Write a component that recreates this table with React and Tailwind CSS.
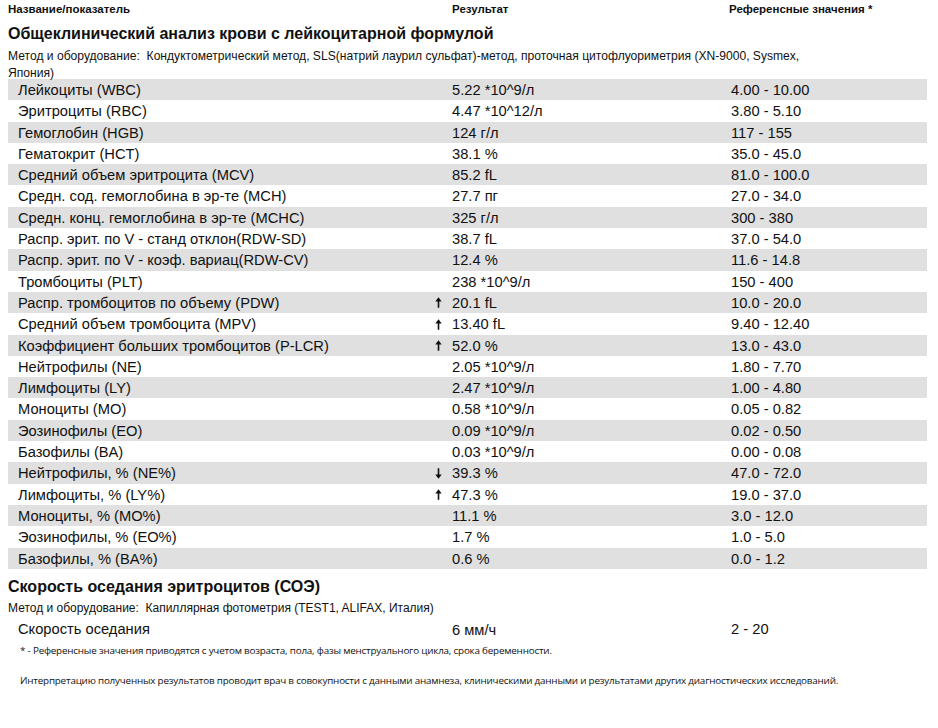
const rows = [
  ["Лейкоциты (WBC)", "", "5.22 *10^9/л", "4.00 - 10.00"],
  ["Эритроциты (RBC)", "", "4.47 *10^12/л", "3.80 - 5.10"],
  ["Гемоглобин (HGB)", "", "124 г/л", "117 - 155"],
  ["Гематокрит (HCT)", "", "38.1 %", "35.0 - 45.0"],
  ["Средний объем эритроцита (MCV)", "", "85.2 fL", "81.0 - 100.0"],
  ["Средн. сод. гемоглобина в эр-те (MCH)", "", "27.7 пг", "27.0 - 34.0"],
  ["Средн. конц. гемоглобина в эр-те (MCHC)", "", "325 г/л", "300 - 380"],
  ["Распр. эрит. по V - станд отклон(RDW-SD)", "", "38.7 fL", "37.0 - 54.0"],
  ["Распр. эрит. по V - коэф. вариац(RDW-CV)", "", "12.4 %", "11.6 - 14.8"],
  ["Тромбоциты (PLT)", "", "238 *10^9/л", "150 - 400"],
  ["Распр. тромбоцитов по объему (PDW)", "up", "20.1 fL", "10.0 - 20.0"],
  ["Средний объем тромбоцита (MPV)", "up", "13.40 fL", "9.40 - 12.40"],
  ["Коэффициент больших тромбоцитов (P-LCR)", "up", "52.0 %", "13.0 - 43.0"],
  ["Нейтрофилы (NE)", "", "2.05 *10^9/л", "1.80 - 7.70"],
  ["Лимфоциты (LY)", "", "2.47 *10^9/л", "1.00 - 4.80"],
  ["Моноциты (MO)", "", "0.58 *10^9/л", "0.05 - 0.82"],
  ["Эозинофилы (EO)", "", "0.09 *10^9/л", "0.02 - 0.50"],
  ["Базофилы (BA)", "", "0.03 *10^9/л", "0.00 - 0.08"],
  ["Нейтрофилы, % (NE%)", "down", "39.3 %", "47.0 - 72.0"],
  ["Лимфоциты, % (LY%)", "up", "47.3 %", "19.0 - 37.0"],
  ["Моноциты, % (MO%)", "", "11.1 %", "3.0 - 12.0"],
  ["Эозинофилы, % (EO%)", "", "1.7 %", "1.0 - 5.0"],
  ["Базофилы, % (BA%)", "", "0.6 %", "0.0 - 1.2"],
];

const Arrow = ({ dir }) => (
  <svg width="7" height="11" viewBox="0 0 7 11" className={dir === "down" ? "rotate-180" : ""}>
    <path d="M3.5 0.3 L6.7 4.6 L4.3 4.6 L4.3 10.7 L2.7 10.7 L2.7 4.6 L0.3 4.6 Z" fill="#111" />
  </svg>
);

const notesFont = { fontFamily: '"Open Sans", "Noto Sans", sans-serif' };

export default function App() {
  return (
    <div className="w-[938px] h-[728px] bg-white text-[#111] overflow-hidden font-['Liberation_Sans',Arial,sans-serif]">
      <div className="grid grid-cols-[444px_279px_1fr] pl-2 pt-[3px] h-[16px] text-[11.5px] font-bold leading-[13px]">
        <div>Название/показатель</div>
        <div>Результат</div>
        <div className="-ml-[2px]">Референсные значения *</div>
      </div>

      <h1 className="pl-2 pt-[8px] text-[16px] font-bold leading-[20px]">
        Общеклинический анализ крови с лейкоцитарной формулой
      </h1>
      <p className="pl-2 pt-[4px] pr-[120px] text-[12.1px] leading-[17px]">
        Метод и оборудование:&nbsp; Кондуктометрический метод, SLS(натрий лаурил сульфат)-метод, проточная цитофлуориметрия (XN-9000, Sysmex, Япония)
      </p>

      <div className="ml-2 w-[919px] mt-[-3px]">
        {rows.map(([name, flag, res, ref], i) => (
          <div
            key={name}
            className={`grid grid-cols-[428px_16px_279px_1fr] h-[21.3px] items-center text-[14.7px] ${i % 2 === 0 ? "bg-[#e0e0e0]" : "bg-white"}`}
          >
            <div className="pl-[10px] whitespace-nowrap">{name}</div>
            <div className="flex items-center -ml-[1px]">{flag && <Arrow dir={flag} />}</div>
            <div>{res}</div>
            <div>{ref}</div>
          </div>
        ))}
      </div>

      <h2 className="pl-2 pt-[8px] text-[16px] font-bold leading-[20px]">Скорость оседания эритроцитов (СОЭ)</h2>
      <p className="pl-2 pt-[4px] text-[12px] leading-[15px]">
        Метод и оборудование:&nbsp; Капиллярная фотометрия (TEST1, ALIFAX, Италия)
      </p>
      <div className="ml-2 grid grid-cols-[444px_279px_1fr] h-[26px] items-center text-[14.7px]">
        <div className="pl-[10px]">Скорость оседания</div>
        <div className="pt-[3px]">6 мм/ч</div>
        <div>2 - 20</div>
      </div>

      <p className="pl-[20px] pt-[2px] text-[9.85px] leading-[13px] tracking-[-0.2px]" style={notesFont}>
        * - Референсные значения приводятся с учетом возраста, пола, фазы менструального цикла, срока беременности.
      </p>
      <p className="pl-[20px] pt-[17px] text-[9.85px] leading-[13px] tracking-[-0.2px]" style={notesFont}>
        Интерпретацию полученных результатов проводит врач в совокупности с данными анамнеза, клиническими данными и результатами других диагностических исследований.
      </p>
    </div>
  );
}
